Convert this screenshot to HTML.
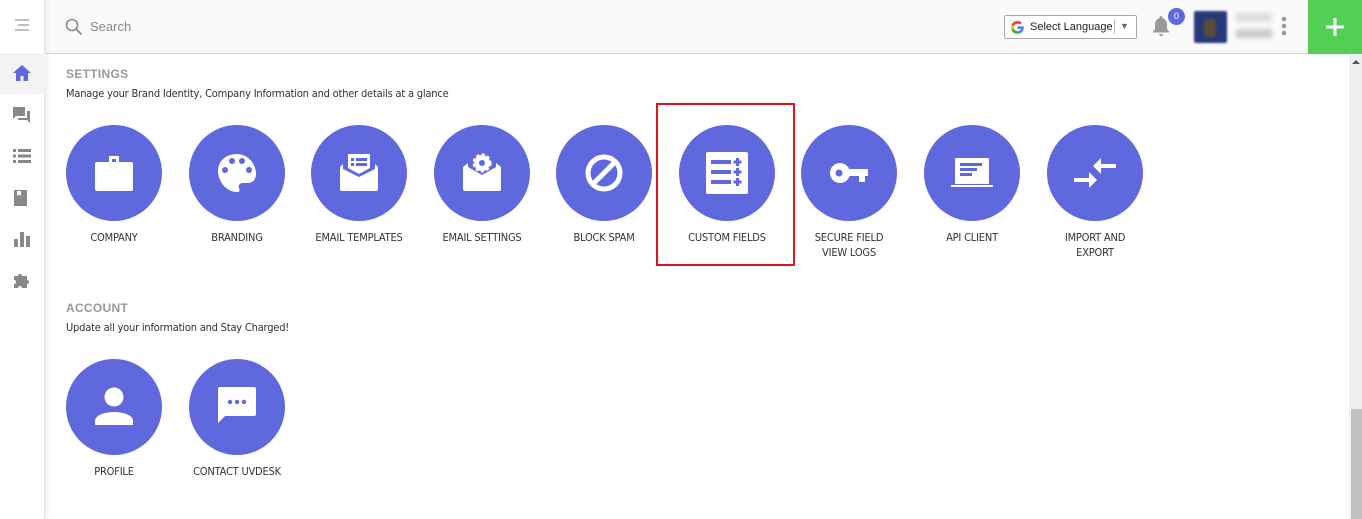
<!DOCTYPE html>
<html><head><meta charset="utf-8"><style>
*{margin:0;padding:0;box-sizing:border-box}
body{width:1362px;height:519px;overflow:hidden;background:#fff;font-family:"Liberation Sans",sans-serif;position:relative}
.side{position:absolute;left:0;top:0;width:45px;height:519px;background:#fff;border-right:1px solid #e4e4e4;box-shadow:2px 0 6px rgba(0,0,0,.08);z-index:2}
.side .act{position:absolute;left:0;top:53px;width:45px;height:41px;background:#f3f3f3}
.side svg{position:absolute;left:12px}
.top{position:absolute;left:45px;top:0;width:1317px;height:54px;background:#fafafa;border-bottom:1px solid #d8d8d8}
.circ{position:absolute;width:96px;height:96px;border-radius:50%;background:#5f68dc}
.circ svg{width:96px;height:96px}
.lbl{position:absolute;width:130px;text-align:center;font-size:11px;color:#333;line-height:15px;font-family:"DejaVu Sans Condensed","Liberation Sans",sans-serif;letter-spacing:-.2px}
h3{position:absolute;left:66px;font-size:12px;color:#999;font-weight:bold;letter-spacing:.3px}
p.sub{position:absolute;left:66px;font-size:11px;color:#333;font-family:"DejaVu Sans Condensed","Liberation Sans",sans-serif;letter-spacing:-.2px}
</style></head><body>
<div class="side">
<div class="act"></div>
<svg style="top:17px" width="20" height="16" viewBox="0 0 20 16"><path d="M3 3h14M6 8h11M3 13h14" stroke="#999" stroke-width="1.2"/></svg>
<svg style="top:63px" width="20" height="20" viewBox="0 0 20 20"><path d="M10 2L1 10h3v8h4.5v-5h3v5H16v-8h3z" fill="#5f68dc"/></svg>
<svg style="top:106px" width="20" height="18" viewBox="0 0 20 18"><path d="M1 1h12v9H4l-3 3zM15 5h3v12l-3-3H6v-2h9z" fill="#888"/></svg>
<svg style="top:147px" width="20" height="18" viewBox="0 0 20 18"><path d="M1 2h3v3H1zM6 2h13v3H6zM1 7.5h3v3H1zM6 7.5h13v3H6zM1 13h3v3H1zM6 13h13v3H6z" fill="#888"/></svg>
<svg style="top:189px" width="20" height="18" viewBox="0 0 20 18"><path d="M2 1h13v16H2zM5 2v5l2-1.5L9 7V2z" fill="#888" fill-rule="evenodd"/></svg>
<svg style="top:230px" width="20" height="18" viewBox="0 0 20 18"><path d="M2 9h4v8H2zM8 2h4v15H8zM14 6h4v11h-4z" fill="#888"/></svg>
<svg style="top:271px" width="20" height="18" viewBox="0 0 20 18"><path d="M2 5h4a2 2 0 1 1 4 0h5v4a2 2 0 1 1 0 4v4h-5a2 2 0 1 0-4 0H2v-4a2 2 0 1 0 0-4z" fill="#888"/></svg>
</div>
<div class="top">
<svg style="position:absolute;left:20px;top:18px" width="18" height="18" viewBox="0 0 18 18"><circle cx="7" cy="7" r="5.5" fill="none" stroke="#888" stroke-width="1.6"/><path d="M11 11l5.5 5.5" stroke="#888" stroke-width="1.8"/></svg>
<div style="position:absolute;left:45px;top:19px;font-size:13px;color:#888">Search</div>
<div style="position:absolute;left:959px;top:15px;width:133px;height:24px;border:1px solid #aaa;border-radius:2px;background:#fff;font-size:11px;color:#222">
<svg style="position:absolute;left:5px;top:4px" width="15" height="15" viewBox="0 0 24 24"><path d="M22 12.2c0-.7-.1-1.4-.2-2H12v3.9h5.6a4.8 4.8 0 0 1-2.1 3.1v2.6h3.4c2-1.8 3.1-4.5 3.1-7.6z" fill="#4285f4"/><path d="M12 22c2.8 0 5.2-.9 6.9-2.5l-3.4-2.6c-.9.6-2.1 1-3.5 1-2.7 0-5-1.8-5.8-4.3H2.7v2.7A10 10 0 0 0 12 22z" fill="#34a853"/><path d="M6.2 13.6a6 6 0 0 1 0-3.8V7.1H2.7a10 10 0 0 0 0 9z" fill="#fbbc05"/><path d="M12 6c1.5 0 2.9.5 4 1.6l3-3A10 10 0 0 0 2.7 7.1l3.5 2.7C7 7.8 9.3 6 12 6z" fill="#ea4335"/></svg>
<span style="position:absolute;left:25px;top:5px">Select Language</span>
<span style="position:absolute;left:109px;top:4px;width:1px;height:14px;background:#bbb"></span>
<span style="position:absolute;left:115px;top:5px;font-size:9px;color:#666">▼</span></div>
<svg style="position:absolute;left:1106px;top:15px" width="20" height="22" viewBox="0 0 20 22"><path d="M10 1a1.5 1.5 0 0 1 1.5 1.5v.7A6 6 0 0 1 16 9v5l2 2.5v1H2v-1L4 14V9a6 6 0 0 1 4.5-5.8v-.7A1.5 1.5 0 0 1 10 1zM8 19h4a2 2 0 0 1-4 0z" fill="#999"/></svg>
<div style="position:absolute;left:1123px;top:8px;width:17px;height:17px;border-radius:50%;background:#5f68dc;color:#fff;font-size:9px;text-align:center;line-height:17px">0</div>
<div style="position:absolute;left:1149px;top:11px;width:33px;height:32px;background:#27397a;border-radius:2px;filter:blur(1px)"><div style="position:absolute;left:10px;top:8px;width:12px;height:18px;background:#5a4a3a;border-radius:4px"></div></div>
<div style="position:absolute;left:1191px;top:13px;width:36px;height:9px;background:#ddd;filter:blur(2px)"></div>
<div style="position:absolute;left:1191px;top:29px;width:36px;height:9px;background:#ccc;filter:blur(2px)"></div>
<svg style="position:absolute;left:1236px;top:16px" width="6" height="22"><circle cx="3" cy="3" r="2.3" fill="#999"/><circle cx="3" cy="10" r="2.3" fill="#999"/><circle cx="3" cy="17" r="2.3" fill="#999"/></svg>
<div style="position:absolute;left:1263px;top:0;width:54px;height:54px;background:#52d053"><svg width="54" height="54"><path d="M27 18v18M18 27h18" stroke="#fff" stroke-width="3"/></svg></div>
</div>
<div style="position:absolute;left:1349px;top:55px;width:13px;height:464px;background:#f0f0f0"></div>
<div style="position:absolute;left:1352px;top:60px;width:0;height:0;border-left:4px solid transparent;border-right:4px solid transparent;border-bottom:4px solid #555"></div>
<div style="position:absolute;left:1351px;top:409px;width:11px;height:110px;background:#c1c1c1"></div>

<h3 style="top:67px">SETTINGS</h3>
<p class="sub" style="top:87px">Manage your Brand Identity, Company Information and other details at a glance</p>

<div class="circ" style="left:66px;top:125px"><svg viewBox="0 0 96 96"><path d="M43 31h10v6h-3v-3h-4v3h-3z M31 37h34a2 2 0 0 1 2 2v25a2 2 0 0 1-2 2H31a2 2 0 0 1-2-2V39a2 2 0 0 1 2-2z" fill="#fff"/></svg></div>
<div class="lbl" style="left:49px;top:230px">COMPANY</div>

<div class="circ" style="left:189px;top:125px"><svg viewBox="0 0 96 96"><path d="M48 29c-11 0-19 7-19 17 0 10 8 21 19 21 3 0 3-2 2-4-1-3 1-5 4-5h5c5 0 8-4 8-9 0-11-9-20-19-20z" fill="#fff"/><circle cx="36" cy="45" r="3" fill="#5f68dc"/><circle cx="43" cy="36" r="3" fill="#5f68dc"/><circle cx="53" cy="36" r="3" fill="#5f68dc"/><circle cx="60" cy="45" r="3" fill="#5f68dc"/></svg></div>
<div class="lbl" style="left:172px;top:230px">BRANDING</div>

<div class="circ" style="left:311px;top:125px"><svg viewBox="0 0 96 96"><path d="M37 29h22v14l-11 6-11-6z" fill="#fff"/><path d="M40 33h3v3h-3zM45 33h11v3H45zM40 38h3v3h-3zM45 38h11v3H45z" fill="#5f68dc"/><path d="M29 42l3-3v5l16 8 16-8v-5l3 3v22a2 2 0 0 1-2 2H31a2 2 0 0 1-2-2z" fill="#fff"/></svg></div>
<div class="lbl" style="left:294px;top:230px">EMAIL TEMPLATES</div>

<div class="circ" style="left:434px;top:125px"><svg viewBox="0 0 96 96"><circle cx="48" cy="38" r="8" fill="#fff" stroke="#fff" stroke-width="3" stroke-dasharray="3 2.3"/><circle cx="48" cy="38" r="3" fill="#5f68dc"/><path d="M29 42l5-4v4l14 8 14-8v-4l5 4v22a2 2 0 0 1-2 2H31a2 2 0 0 1-2-2z" fill="#fff"/></svg></div>
<div class="lbl" style="left:417px;top:230px">EMAIL SETTINGS</div>

<div class="circ" style="left:556px;top:125px"><svg viewBox="0 0 96 96"><circle cx="48" cy="48" r="16" fill="none" stroke="#fff" stroke-width="5"/><path d="M36 60l24-24" stroke="#fff" stroke-width="5"/></svg></div>
<div class="lbl" style="left:539px;top:230px">BLOCK SPAM</div>

<div class="circ" style="left:679px;top:125px"><svg viewBox="0 0 96 96"><rect x="27" y="27" width="42" height="42" rx="2" fill="#fff"/><path d="M32 35h20v4H32zM32 45h20v4H32zM32 55h20v4H32zM57 33h3v8h-3zM54.5 35.5h8v3h-8zM57 43h3v8h-3zM54.5 45.5h8v3h-8zM57 53h3v8h-3zM54.5 55.5h8v3h-8z" fill="#5f68dc"/></svg></div>
<div class="lbl" style="left:662px;top:230px">CUSTOM FIELDS</div>
<div style="position:absolute;left:656px;top:103px;width:139px;height:163px;border:2px solid #e3131b"></div>

<div class="circ" style="left:801px;top:125px"><svg viewBox="0 0 96 96"><circle cx="39" cy="48" r="10" fill="#fff"/><circle cx="38" cy="48" r="3.5" fill="#5f68dc"/><path d="M46 44h21v7h-3v6h-6v-6h-12z" fill="#fff"/></svg></div>
<div class="lbl" style="left:784px;top:230px">SECURE FIELD<br>VIEW LOGS</div>

<div class="circ" style="left:924px;top:125px"><svg viewBox="0 0 96 96"><rect x="31" y="33" width="34" height="26" rx="1" fill="#fff"/><path d="M36 38h22v3H36zM36 43h17v3H36zM36 48h12v3H36z" fill="#5f68dc"/><path d="M27 60h42v2H27z" fill="#fff"/></svg></div>
<div class="lbl" style="left:907px;top:230px">API CLIENT</div>

<div class="circ" style="left:1047px;top:125px"><svg viewBox="0 0 96 96"><path d="M46 41l8-8v6h15v4H54v6z M50 55l-8-8v6H27v4h15v6z" fill="#fff"/></svg></div>
<div class="lbl" style="left:1030px;top:230px">IMPORT AND<br>EXPORT</div>

<h3 style="top:301px">ACCOUNT</h3>
<p class="sub" style="top:321px">Update all your information and Stay Charged!</p>

<div class="circ" style="left:66px;top:359px"><svg viewBox="0 0 96 96"><circle cx="48" cy="38" r="9.5" fill="#fff"/><path d="M29 66v-4c0-6 10-9 19-9s19 3 19 9v4z" fill="#fff"/></svg></div>
<div class="lbl" style="left:49px;top:464px">PROFILE</div>

<div class="circ" style="left:189px;top:359px"><svg viewBox="0 0 96 96"><path d="M31 28h34a2 2 0 0 1 2 2v25a2 2 0 0 1-2 2H36l-7 7V30a2 2 0 0 1 2-2z" fill="#fff"/><circle cx="41" cy="43" r="2.2" fill="#5f68dc"/><circle cx="48" cy="43" r="2.2" fill="#5f68dc"/><circle cx="55" cy="43" r="2.2" fill="#5f68dc"/></svg></div>
<div class="lbl" style="left:172px;top:464px">CONTACT UVDESK</div>
</body></html>
